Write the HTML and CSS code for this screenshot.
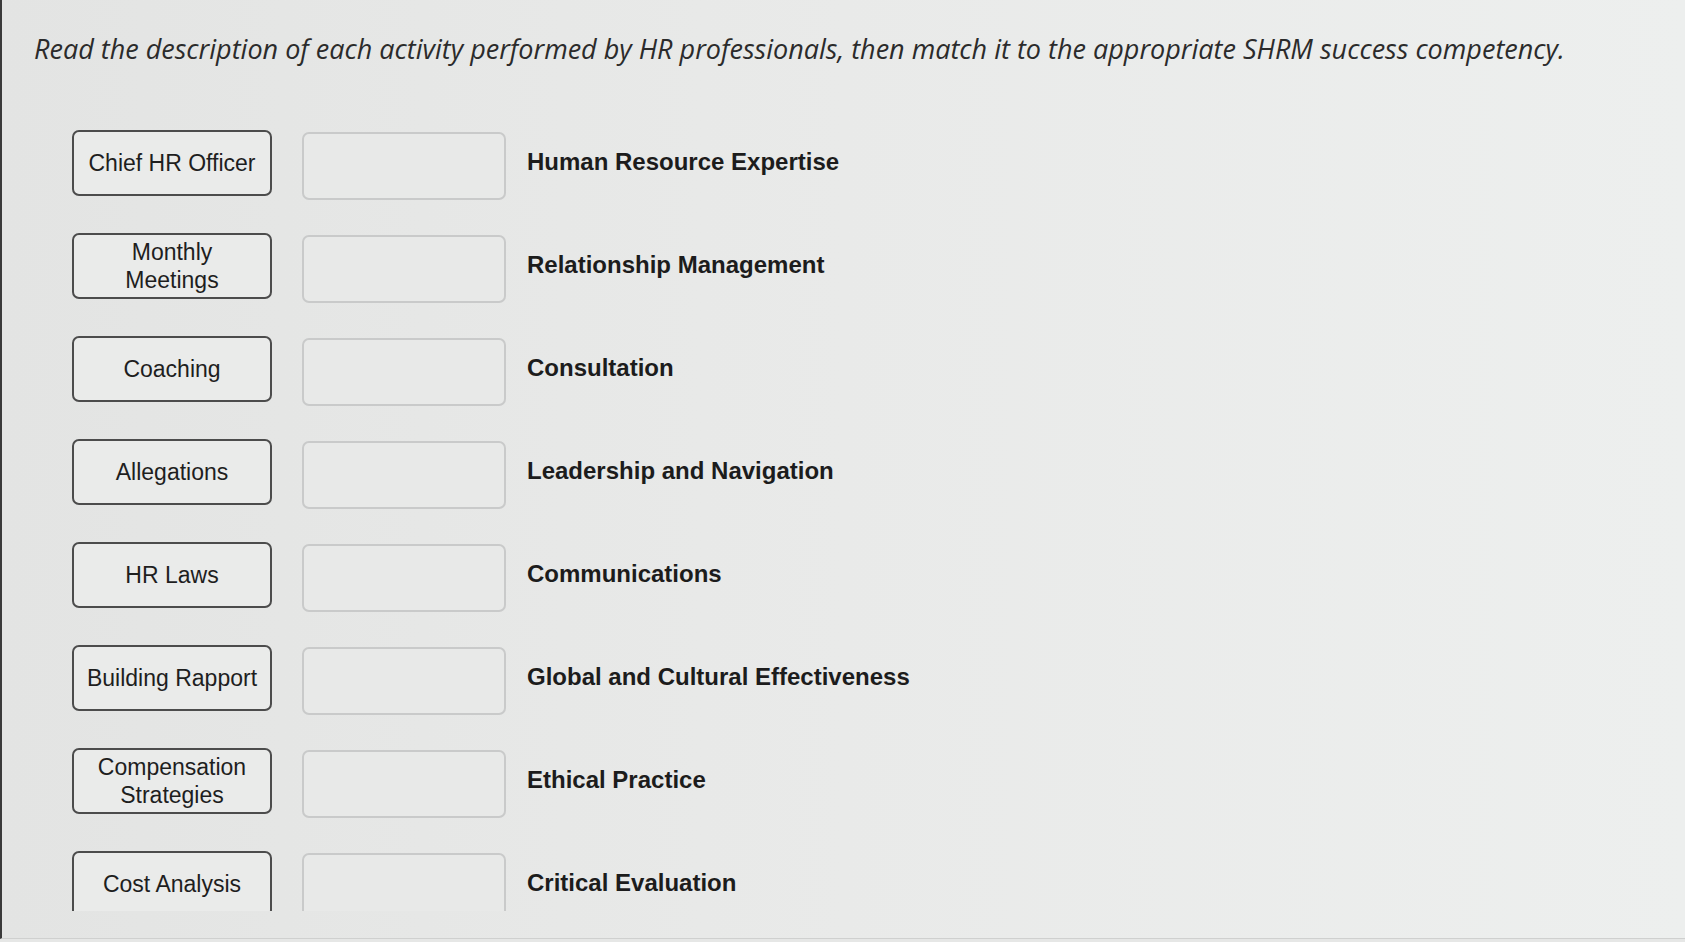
FILE: index.html
```html
<!DOCTYPE html>
<html lang="en">
<head>
  <meta charset="UTF-8" />
  <meta name="viewport" content="width=device-width, initial-scale=1.0"/>
  <title>SHRM Competency Matching</title>
  <link rel="stylesheet" href="styles.css">
</head>
<body>
  <div class="screen">
    <p class="prompt">Read the description of each activity performed by HR professionals, then match it to the appropriate SHRM success competency.</p>

    <div class="board">
      <div class="match-row">
        <div class="chip">Chief HR Officer</div>
        <div class="drop"></div>
        <div class="term">Human Resource Expertise</div>
      </div>
      <div class="match-row">
        <div class="chip">Monthly Meetings</div>
        <div class="drop"></div>
        <div class="term">Relationship Management</div>
      </div>
      <div class="match-row">
        <div class="chip">Coaching</div>
        <div class="drop"></div>
        <div class="term">Consultation</div>
      </div>
      <div class="match-row">
        <div class="chip">Allegations</div>
        <div class="drop"></div>
        <div class="term">Leadership and Navigation</div>
      </div>
      <div class="match-row">
        <div class="chip">HR Laws</div>
        <div class="drop"></div>
        <div class="term">Communications</div>
      </div>
      <div class="match-row">
        <div class="chip">Building Rapport</div>
        <div class="drop"></div>
        <div class="term">Global and Cultural Effectiveness</div>
      </div>
      <div class="match-row">
        <div class="chip">Compensation Strategies</div>
        <div class="drop"></div>
        <div class="term">Ethical Practice</div>
      </div>
      <div class="match-row">
        <div class="chip">Cost Analysis</div>
        <div class="drop"></div>
        <div class="term">Critical Evaluation</div>
      </div>
    </div>
  </div>
</body>
</html>
```

FILE: styles.css
```css
html, body {
  margin: 0;
  height: 100%;
}
body {
  background: #e6e7e6;
  overflow: hidden;
}
.screen {
  height: 939px;
  border-left: 2px solid #3a3a3a;
  border-bottom: 1px solid #cfd0cf;
  background: linear-gradient(to right, #e3e4e3, #e9eae9 50%, #edefee);
  box-sizing: border-box;
}
.prompt {
  margin: 0;
  padding: 34px 0 0 32px;
  font-family: "Open Sans", Lato, sans-serif;
  font-style: italic;
  font-size: 27px;
  line-height: 30px;
  color: #2b2b2b;
}
.board {
  margin-top: 64px;
  padding-left: 70px;
  height: 783px;
  overflow: hidden;
  display: flex;
  flex-direction: column;
  gap: 31px;
}
.match-row {
  display: flex;
  align-items: flex-start;
}
.chip {
  box-sizing: border-box;
  width: 200px;
  height: 66px;
  margin-top: 2px;
  padding: 0 10px;
  border: 2px solid #4c4c4c;
  border-radius: 7px;
  background: #eaebea;
  display: flex;
  align-items: center;
  justify-content: center;
  text-align: center;
  font-family: "Liberation Sans", Arial, sans-serif;
  font-size: 23px;
  line-height: 28px;
  color: #1e1e1e;
}
.drop {
  box-sizing: border-box;
  width: 204px;
  height: 68px;
  margin: 4px 0 0 30px;
  border: 2px solid #c9caca;
  border-radius: 7px;
  background: #e8e9e8;
}
.term {
  margin: 20px 0 0 21px;
  font-family: "Liberation Sans", Arial, sans-serif;
  font-weight: bold;
  font-size: 24px;
  line-height: 28px;
  color: #1c1c1c;
}
```
